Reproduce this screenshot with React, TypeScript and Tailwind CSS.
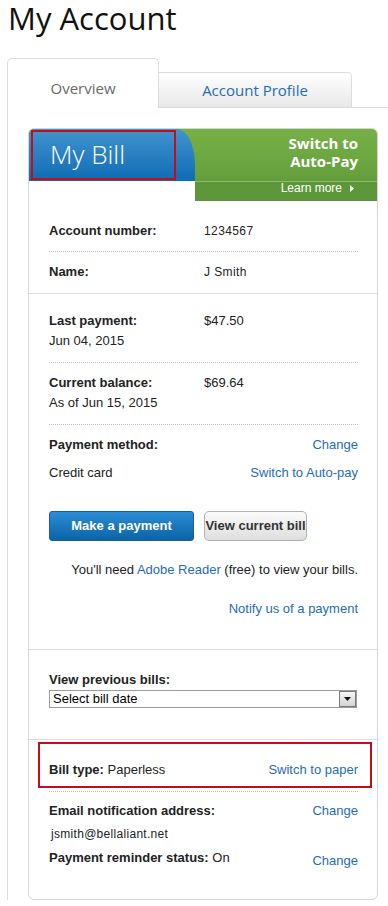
import React from 'react';

const sans = "font-['Liberation_Sans',Arial,sans-serif]";
const round = "font-['Open_Sans','Noto_Sans',sans-serif]";
const link = 'text-[#1f6db3]';

const Row = ({ label, value }: { label: string; value: string }) => (
    <div className="flex">
        <div className="w-[155px] font-bold">{label}</div>
        <div className="text-[12px] tracking-[0.4px]">{value}</div>
    </div>
);

export default function App() {
    return (
        <div className={`w-[388px] min-h-[906px] bg-white overflow-hidden text-[#222] ${sans}`}>
            {/* page title */}
            <h1 className={`${round} font-normal text-[31px] leading-[36px] h-[34px] pl-[8px] text-[#111]`}>My Account</h1>

            {/* tabs */}
            <div className="flex items-end ml-[7px] mt-[24px]">
                <div className={`w-[152px] h-[50px] border border-b-0 border-[#dcdcdc] rounded-t-[5px] bg-white text-center pt-[19px] ${round} text-[15px] leading-[20px] text-[#6a6a6a]`}>
                    Overview
                </div>
                <div className={`w-[193px] h-[36px] border-t border-r border-b border-[#dcdcdc] rounded-tr-[5px] bg-gradient-to-b from-white to-[#e8e8e8] flex items-center justify-center ${round} text-[15px] leading-[20px] text-[#1f6db3]`}>
                    Account Profile
                </div>
                <div className="flex-1 border-b border-[#dcdcdc]" />
            </div>

            {/* panel */}
            <div className="ml-[7px] border-l border-[#dcdcdc] pl-[20px] pt-[20px]">
                <div className="w-[350px] border border-[#d6d6d6] rounded-[6px] overflow-hidden text-[13px] leading-[20px]">
                    {/* bill header */}
                    <div className="flex h-[52px] bg-gradient-to-b from-[#76b046] to-[#659f3d]">
                        <div className="w-[166px] h-full bg-gradient-to-b from-[#4094ce] to-[#0a6cb4] rounded-tr-[18px_36px] rounded-tl-[3px]">
                            <div className="ml-[2px] mt-[1px] w-[145px] h-[50px] border-2 border-[#c40c1c] pl-[17px] pt-[7px]">
                                <div className={`${round} font-light text-[26px] leading-[30px] text-white`}>My Bill</div>
                            </div>
                        </div>
                        <div className={`flex-1 text-right pr-[19px] pt-[5px] ${round} font-bold text-[15px] leading-[18px] text-white`}>
                            Switch to
                            <br />
                            Auto-Pay
                        </div>
                    </div>
                    <div className="flex h-[20px]">
                        <div className="w-[166px] bg-white" />
                        <div className="flex-1 bg-[#5e973a] border-t border-[#8abb68] flex justify-end pr-[23px] text-white text-[12px] leading-[13px]">
                            <span>Learn more</span>
                            <svg width="4" height="7" viewBox="0 0 4 7" className="ml-[8px] mt-[3px]">
                                <path d="M0 0 L4 3.5 L0 7 Z" fill="#fff" />
                            </svg>
                        </div>
                    </div>

                    {/* account info */}
                    <div className="pl-[20px] pr-[19px] pt-[20px] pb-[11px] border-b border-[#dddddd]">
                        <div className="pb-[10px] border-b border-dotted border-[#c2c2c2]">
                            <Row label="Account number:" value="1234567" />
                        </div>
                        <div className="pt-[10px]">
                            <Row label="Name:" value="J Smith" />
                        </div>
                    </div>

                    {/* payments */}
                    <div className="pl-[20px] pr-[19px] pt-[17px] pb-[30px] border-b border-[#dddddd]">
                        <div className="pb-[11px] border-b border-dotted border-[#c2c2c2] flex">
                            <div className="w-[155px]">
                                <div className="font-bold">Last payment:</div>
                                <div>Jun 04, 2015</div>
                            </div>
                            <div>$47.50</div>
                        </div>
                        <div className="pt-[10px] pb-[11px] border-b border-dotted border-[#c2c2c2] flex">
                            <div className="w-[155px]">
                                <div className="font-bold">Current balance:</div>
                                <div>As of Jun 15, 2015</div>
                            </div>
                            <div>$69.64</div>
                        </div>
                        <div className="pt-[10px] flex justify-between">
                            <span className="font-bold">Payment method:</span>
                            <span className={link}>Change</span>
                        </div>
                        <div className="mt-[8px] flex justify-between">
                            <span>Credit card</span>
                            <span className={link}>Switch to Auto-pay</span>
                        </div>
                        <div className="mt-[28px] flex gap-[10px]">
                            <button className="w-[145px] h-[30px] rounded-[3px] border border-[#1d5d8f] bg-gradient-to-b from-[#2b8dd6] to-[#0a64a6] text-white font-bold text-[13px]">
                                Make a payment
                            </button>
                            <button className="w-[103px] h-[30px] rounded-[5px] border border-[#b0b0b0] bg-gradient-to-b from-[#fbfbfb] to-[#dedede] text-[#333] font-bold text-[13px]">
                                View current bill
                            </button>
                        </div>
                        <div className="mt-[19px] text-right">
                            You'll need <span className={link}>Adobe Reader</span> (free) to view your bills.
                        </div>
                        <div className={`mt-[19px] text-right ${link}`}>Notify us of a payment</div>
                    </div>

                    {/* previous bills */}
                    <div className="pl-[20px] pr-[20px] pt-[20px] pb-[31px] border-b border-[#dddddd]">
                        <div className="font-bold">View previous bills:</div>
                        <div className="h-[18px] border border-[#9c9c9c] flex items-center justify-between pl-[3px]">
                            <span className="text-black leading-[16px]">Select bill date</span>
                            <div className="w-[17px] h-[16px] border border-[#7a7a7a] bg-gradient-to-b from-[#f6f6f6] to-[#d4d4d4] flex items-center justify-center">
                                <svg width="7" height="4" viewBox="0 0 7 4">
                                    <path d="M0 0 L7 0 L3.5 4 Z" fill="#111" />
                                </svg>
                            </div>
                        </div>
                    </div>

                    {/* bill type and notifications */}
                    <div className="pt-[2px] pb-[31px]">
                        <div className="ml-[9px] mr-[5px] border-2 border-[#c40c1c] pl-[9px] pr-[12px] pt-[16px] pb-[6px] flex justify-between">
                            <span>
                                <span className="font-bold">Bill type:</span> Paperless
                            </span>
                            <span className={link}>Switch to paper</span>
                        </div>
                        <div className="ml-[20px] mr-[19px] mt-[3px] border-b border-dotted border-[#c2c2c2]" />
                        <div className="pl-[20px] pr-[19px]">
                            <div className="pt-[9px] flex justify-between">
                                <span className="font-bold">Email notification address:</span>
                                <span className={link}>Change</span>
                            </div>
                            <div className="mt-[3px] pl-[2px] text-[12px] tracking-[0.3px]">jsmith@bellaliant.net</div>
                            <div className="mt-[4px] flex justify-between">
                                <span>
                                    <span className="font-bold">Payment reminder status:</span> On
                                </span>
                                <span className={`${link} translate-y-[3px]`}>Change</span>
                            </div>
                        </div>
                    </div>
                </div>
            </div>
        </div>
    );
}
